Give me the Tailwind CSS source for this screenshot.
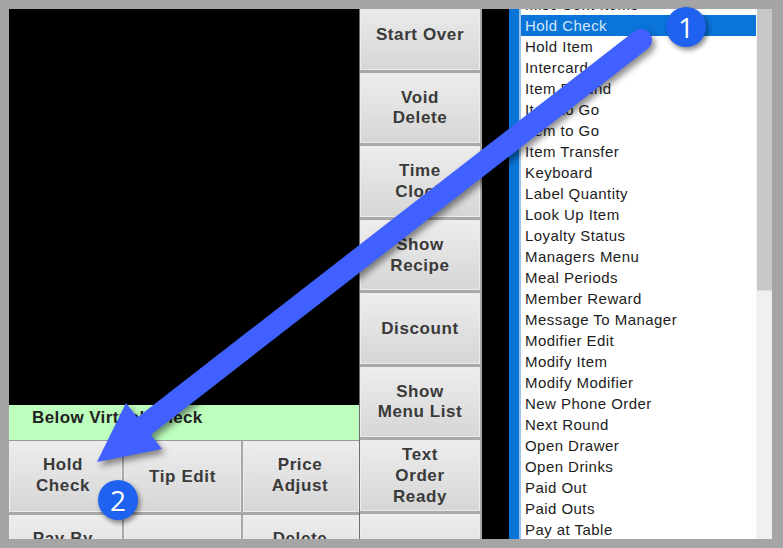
<!DOCTYPE html>
<html lang="en">
<head>
    <meta charset="UTF-8">
    <title>Hold Check</title>
    <script src="https://cdn.jsdelivr.net/npm/@tailwindcss/browser@4"></script>
</head>
<body class="bg-[#a5a5a5] font-['Liberation_Sans',Arial,sans-serif]">
<div class="relative w-[783px] h-[548px] overflow-hidden bg-[#a5a5a5] pt-[9px] pb-[9px] pl-[9px] pr-[11px]">
    <div class="flex h-full overflow-hidden bg-black">
        <!-- check area -->
        <div class="flex flex-col w-[350px] shrink-0">
            <div class="h-[396px] shrink-0 bg-black"></div>
            <div class="h-[36px] shrink-0 bg-[#bdffbd] pl-[23px] pt-[3px] text-[17px] leading-[20px] font-bold tracking-[0.4px] text-[#222] border-b border-[#999]">Below Virtual Check</div>
            <div class="grid grid-cols-[113px_117px_116px] gap-x-[2px] gap-y-[3px] bg-[#a8a8a8] pr-[1px] h-[200px]">
                <div class="h-[71px] flex items-center justify-center text-center pb-[4px] pr-[5px] text-[17px] leading-[21px] font-bold tracking-[0.6px] text-[#3a3a3a] border border-[#ececec] bg-gradient-to-b from-[#ededed] to-[#d6d6d6]">Hold<br>Check</div>
                <div class="h-[71px] flex items-center justify-center text-center text-[17px] leading-[21px] font-bold tracking-[0.6px] text-[#3a3a3a] border border-[#ececec] bg-gradient-to-b from-[#ededed] to-[#d6d6d6]">Tip Edit</div>
                <div class="h-[71px] flex items-center justify-center text-center pb-[4px] pr-[2px] text-[17px] leading-[21px] font-bold tracking-[0.6px] text-[#3a3a3a] border border-[#ececec] bg-gradient-to-b from-[#ededed] to-[#d6d6d6]">Price<br>Adjust</div>
                <div class="h-[71px] flex items-center justify-center text-center pb-[4px] pr-[5px] text-[17px] leading-[21px] font-bold tracking-[0.6px] text-[#3a3a3a] border border-[#ececec] bg-gradient-to-b from-[#ededed] to-[#d6d6d6]">Pay By<br>Card</div>
                <div class="h-[71px] border border-[#ececec] bg-gradient-to-b from-[#ededed] to-[#d6d6d6]"></div>
                <div class="h-[71px] flex items-center justify-center text-center pb-[4px] pr-[2px] text-[17px] leading-[21px] font-bold tracking-[0.6px] text-[#3a3a3a] border border-[#ececec] bg-gradient-to-b from-[#ededed] to-[#d6d6d6]">Delete<br>Item</div>
            </div>
        </div>
        <!-- button column -->
        <div class="flex flex-col gap-[3px] w-[123px] shrink-0 bg-[#a8a8a8] border-l border-[#6e6e6e] pr-[2px] h-[560px] -mt-[9px]">
            <div class="h-[70px] shrink-0 flex items-center justify-center text-center pb-[2px] text-[17px] leading-[21px] font-bold tracking-[0.6px] text-[#3a3a3a] border border-[#ececec] bg-gradient-to-b from-[#ededed] to-[#d6d6d6]">Start Over</div>
            <div class="h-[70px] shrink-0 flex items-center justify-center text-center text-[17px] leading-[20px] font-bold tracking-[0.6px] text-[#3a3a3a] border border-[#ececec] bg-gradient-to-b from-[#ededed] to-[#d6d6d6]">Void<br>Delete</div>
            <div class="h-[71px] shrink-0 flex items-center justify-center text-center pb-[2px] text-[17px] leading-[21px] font-bold tracking-[0.6px] text-[#3a3a3a] border border-[#ececec] bg-gradient-to-b from-[#ededed] to-[#d6d6d6]">Time<br>Clock</div>
            <div class="h-[70px] shrink-0 flex items-center justify-center text-center text-[17px] leading-[21px] font-bold tracking-[0.6px] text-[#3a3a3a] border border-[#ececec] bg-gradient-to-b from-[#ededed] to-[#d6d6d6]">Show<br>Recipe</div>
            <div class="h-[71px] shrink-0 flex items-center justify-center text-center text-[17px] leading-[21px] font-bold tracking-[0.6px] text-[#3a3a3a] border border-[#ececec] bg-gradient-to-b from-[#ededed] to-[#d6d6d6]">Discount</div>
            <div class="h-[70px] shrink-0 flex items-center justify-center text-center text-[17px] leading-[20px] font-bold tracking-[0.6px] text-[#3a3a3a] border border-[#ececec] bg-gradient-to-b from-[#ededed] to-[#d6d6d6]">Show<br>Menu List</div>
            <div class="h-[71px] shrink-0 flex items-center justify-center text-center text-[17px] leading-[21px] font-bold tracking-[0.6px] text-[#3a3a3a] border border-[#ececec] bg-gradient-to-b from-[#ededed] to-[#d6d6d6]">Text<br>Order<br>Ready</div>
            <div class="h-[71px] shrink-0 border border-[#ececec] bg-gradient-to-b from-[#ededed] to-[#d6d6d6]"></div>
        </div>
        <!-- function list -->
        <div class="flex flex-1 min-w-0 pl-[27px] bg-black">
            <div class="w-[12px] shrink-0 bg-[#0a74d8] border-r-2 border-[#9cc4ea]"></div>
            <div class="w-[235px] shrink-0 bg-white -mt-[15px] pl-[4px] text-[15px] leading-[21px] tracking-[0.45px] text-[#1c1c1c] overflow-hidden">
                <div>Misc Sent Items</div>
                <div class="-ml-[4px] pl-[4px] bg-[#0a74d8] text-[#d5e8fa]">Hold Check</div>
                <div>Hold Item</div>
                <div>Intercard</div>
                <div>Item Refund</div>
                <div>Item to Go</div>
                <div>Item to Go</div>
                <div>Item Transfer</div>
                <div>Keyboard</div>
                <div>Label Quantity</div>
                <div>Look Up Item</div>
                <div>Loyalty Status</div>
                <div>Managers Menu</div>
                <div>Meal Periods</div>
                <div>Member Reward</div>
                <div>Message To Manager</div>
                <div>Modifier Edit</div>
                <div>Modify Item</div>
                <div>Modify Modifier</div>
                <div>New Phone Order</div>
                <div>Next Round</div>
                <div>Open Drawer</div>
                <div>Open Drinks</div>
                <div>Paid Out</div>
                <div>Paid Outs</div>
                <div>Pay at Table</div>
            </div>
            <div class="flex-1 flex flex-col border-l border-[#f5f5f5]">
                <div class="h-[282px] bg-[#c8c8c8] border-b border-[#dedede]"></div>
                <div class="flex-1 bg-[#f0f0f0]"></div>
            </div>
        </div>
    </div>
    <!-- callout arrow and numbered badges -->
    <svg class="absolute left-0 top-0" width="783" height="548" viewBox="0 0 783 548">
        <g class="drop-shadow-[3px_4px_3px_rgba(0,0,0,0.45)]">
            <path d="M641 40 L125 441" stroke="#4060ff" stroke-width="22" stroke-linecap="round" fill="none"/>
            <polygon points="97,462 126,403 162,449" fill="#4060ff"/>
        </g>
    </svg>
    <div class="absolute left-[666px] top-[7px] w-10 h-10 rounded-full bg-[#1f62f0] shadow-[2px_3px_5px_rgba(0,0,0,0.45)] flex items-center justify-center text-white text-[28px] font-['Open_Sans',sans-serif]">1</div>
    <div class="absolute left-[98px] top-[480px] w-10 h-10 rounded-full bg-[#1f62f0] shadow-[2px_3px_5px_rgba(0,0,0,0.45)] flex items-center justify-center text-white text-[28px] font-['Open_Sans',sans-serif]">2</div>
</div>
</body>
</html>
